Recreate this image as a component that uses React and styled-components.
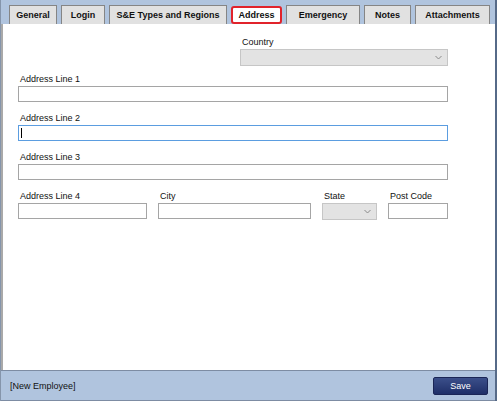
import React from 'react';
import styled, { createGlobalStyle } from 'styled-components';

const GlobalStyle = createGlobalStyle`
body {
    margin: 0;
    font-family: "Liberation Sans", Arial, sans-serif;
}
* {
    box-sizing: border-box;
}
`;

const tabs = [
    { label: 'General', width: 48 },
    { label: 'Login', width: 44 },
    { label: 'S&E Types and Regions', width: 118 },
    { label: 'Address', width: 51, active: true },
    { label: 'Emergency', width: 74 },
    { label: 'Notes', width: 47 },
    { label: 'Attachments', width: 75 },
];

// chevron used by the disabled drop downs
const Chevron = () => (
    <svg width="7" height="5" viewBox="0 0 7 5">
        <path d="M0.5 1 L3.5 4 L6.5 1" fill="none" stroke="#8a8a8a" strokeWidth="1" />
    </svg>
);

const Field = ({ label, width, focused, select }) => (
    <FieldGroup style={width ? { width } : undefined}>
        <Label>{label}</Label>
        {select ? (
            <SelectBox>
                <Chevron />
            </SelectBox>
        ) : (
            <InputWrap $focused={focused}>
                <TextInput type="text" $focused={focused} readOnly />
            </InputWrap>
        )}
    </FieldGroup>
);

export default function App() {
    return (
        <>
            <GlobalStyle />
            <Frame>
                <TabBar>
                    {tabs.map((tab) => (
                        <Tab key={tab.label} $width={tab.width} $active={tab.active}>
                            {tab.label}
                        </Tab>
                    ))}
                </TabBar>
                <Content>
                    <Form>
                        <CountryRow>
                            <Field label="Country" width={208} select />
                        </CountryRow>
                        <Field label="Address Line 1" />
                        <Field label="Address Line 2" focused />
                        <Field label="Address Line 3" />
                        <BottomRow>
                            <Field label="Address Line 4" />
                            <Field label="City" />
                            <Field label="State" select />
                            <Field label="Post Code" />
                        </BottomRow>
                    </Form>
                </Content>
                <Footer>
                    <Status>[New Employee]</Status>
                    <SaveBtn>Save</SaveBtn>
                </Footer>
            </Frame>
        </>
    );
}

const Frame = styled.div`
width: 497px;
height: 401px;
display: flex;
flex-direction: column;
background: #b0c4de;
border-left: 1px solid #8595ab;
border-right: 2px solid #566a88;
`;

const TabBar = styled.div`
height: 24px;
flex-shrink: 0;
display: flex;
align-items: flex-end;
gap: 4px;
padding-left: 8px;
`;

const Tab = styled.div`
width: ${(p) => p.$width}px;
height: ${(p) => (p.$active ? 18 : 19)}px;
display: flex;
align-items: center;
justify-content: center;
font-size: 9px;
font-weight: bold;
color: #111;
background: ${(p) => (p.$active ? '#fff' : '#e1e1e1')};
border: ${(p) => (p.$active ? '2px solid #e1232b' : '1px solid #858585')};
border-bottom: ${(p) => (p.$active ? '2px solid #e1232b' : 'none')};
border-radius: ${(p) => (p.$active ? '3px' : '0')};
white-space: nowrap;
`;

const Content = styled.div`
flex: 1;
background: #fff;
border-left: 2px solid #a9a9a9;
padding: 11px 0 0 15px;
`;

const Form = styled.div`
width: 430px;
display: flex;
flex-direction: column;
gap: 9px;
`;

const CountryRow = styled.div`
display: flex;
justify-content: flex-end;
margin-bottom: -3px;
`;

const BottomRow = styled.div`
display: grid;
grid-template-columns: 129px 153px 55px 60px;
column-gap: 10px;
justify-content: space-between;
`;

const FieldGroup = styled.div`
display: flex;
flex-direction: column;
`;

const Label = styled.div`
font-size: 9px;
line-height: 14px;
color: #111;
padding-left: 2px;
`;

const InputWrap = styled.div`
position: relative;
height: 16px;

&::after {
    content: '';
    display: ${(p) => (p.$focused ? 'block' : 'none')};
    position: absolute;
    left: 3px;
    top: 3px;
    width: 1px;
    height: 10px;
    background: #000;
}
`;

const TextInput = styled.input`
display: block;
width: 100%;
height: 16px;
margin: 0;
padding: 0 3px;
font-size: 9px;
font-family: inherit;
background: #fff;
border: 1px solid ${(p) => (p.$focused ? '#5b9de0' : '#a5a5a5')};
outline: none;
`;

const SelectBox = styled.div`
height: 17px;
display: flex;
align-items: center;
justify-content: flex-end;
padding-right: 5px;
background: #e3e3e3;
border: 1px solid #c6c6c6;
`;

const Footer = styled.div`
height: 31px;
flex-shrink: 0;
display: flex;
align-items: center;
justify-content: space-between;
padding: 0 7px 0 9px;
border-top: 1px solid #7d8ca3;
border-bottom: 1px solid #7d8ca3;
`;

const Status = styled.div`
font-size: 9px;
color: #111;
`;

const SaveBtn = styled.button`
width: 55px;
height: 18px;
margin: 0;
padding: 0;
font-family: inherit;
font-size: 9px;
color: #fff;
background: linear-gradient(#3b4f8a, #1f2f68);
border: 1px solid #1b2656;
border-radius: 2px;
`;
